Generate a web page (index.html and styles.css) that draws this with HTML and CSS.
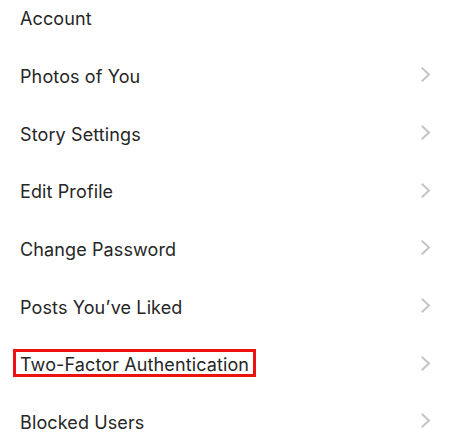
FILE: index.html
```html
<!DOCTYPE html>
<html>
<head>
<meta charset="utf-8">
<link rel="stylesheet" href="styles.css">
</head>
<body>
<div class="screen">
  <div class="header"><span class="label">Account</span></div>
  <ul class="list">
    <li class="row"><span class="label">Photos of You</span><svg class="chev" width="10" height="15" viewBox="0 0 10 15"><polyline points="1.5,1.5 8,7.5 1.5,13.5"/></svg></li>
    <li class="row"><span class="label">Story Settings</span><svg class="chev" width="10" height="15" viewBox="0 0 10 15"><polyline points="1.5,1.5 8,7.5 1.5,13.5"/></svg></li>
    <li class="row"><span class="label">Edit Profile</span><svg class="chev" width="10" height="15" viewBox="0 0 10 15"><polyline points="1.5,1.5 8,7.5 1.5,13.5"/></svg></li>
    <li class="row"><span class="label">Change Password</span><svg class="chev" width="10" height="15" viewBox="0 0 10 15"><polyline points="1.5,1.5 8,7.5 1.5,13.5"/></svg></li>
    <li class="row"><span class="label">Posts You’ve Liked</span><svg class="chev" width="10" height="15" viewBox="0 0 10 15"><polyline points="1.5,1.5 8,7.5 1.5,13.5"/></svg></li>
    <li class="row"><span class="label highlight">Two-Factor Authentication</span><svg class="chev" width="10" height="15" viewBox="0 0 10 15"><polyline points="1.5,1.5 8,7.5 1.5,13.5"/></svg></li>
    <li class="row"><span class="label">Blocked Users</span><svg class="chev" width="10" height="15" viewBox="0 0 10 15"><polyline points="1.5,1.5 8,7.5 1.5,13.5"/></svg></li>
  </ul>
</div>
</body>
</html>
```
FILE: styles.css
```css
html, body {
  margin: 0;
  padding: 0;
  background: #ffffff;
}
.screen {
  width: 450px;
  height: 446px;
  overflow: hidden;
  font-family: Inter, "Liberation Sans", sans-serif;
  font-size: 18px;
  letter-spacing: 0.12px;
  color: #262626;
}
.header {
  height: 46px;
  padding-left: 13px;
  display: flex;
  align-items: flex-start;
}
.header .label {
  margin-top: 2px;
}
.list {
  list-style: none;
  margin: 0;
  padding: 0;
}
.row {
  height: 57.67px;
  display: flex;
  align-items: center;
  justify-content: space-between;
  padding: 0 19px 0 13px;
}
.label {
  display: inline-block;
  line-height: 18px;
  padding: 4.5px 4px 0 4px;
  border: 3px solid transparent;
  white-space: nowrap;
}
.label.highlight {
  border-color: #ee1111;
}
.chev {
  display: block;
  fill: none;
  stroke: #c4c4c6;
  stroke-width: 2;
  stroke-linecap: square;
  stroke-linejoin: miter;
}
```
